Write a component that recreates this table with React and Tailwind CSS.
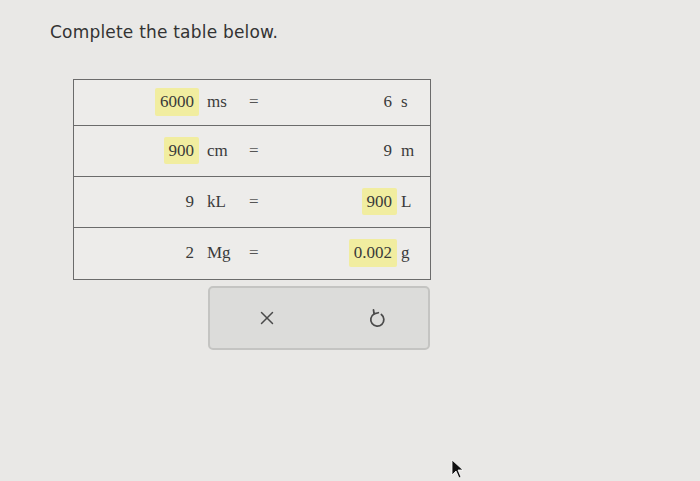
import { X } from 'lucide-react';

const rows = [
    { lv: '6000', lu: 'ms', lh: true, rv: '6', ru: 's', rh: false, h: 'h-[45px]' },
    { lv: '900', lu: 'cm', lh: true, rv: '9', ru: 'm', rh: false, h: 'h-[51px]' },
    { lv: '9', lu: 'kL', lh: false, rv: '900', ru: 'L', rh: true, h: 'h-[51px]' },
    { lv: '2', lu: 'Mg', lh: false, rv: '0.002', ru: 'g', rh: true, h: 'h-[52px]' },
];

// every value sits in the same padded box, only answered ones are highlighted
const Value = ({ v, hl }) => (
    <span className={`px-[5px] py-[1px] rounded-[2px] ${hl ? 'bg-[#f1eda0]' : ''}`}>{v}</span>
);

const UndoIcon = () => (
    <svg width="24" height="24" viewBox="0 0 22 22" fill="none" stroke="#4a4a4a" strokeWidth="1.6" strokeLinecap="round" strokeLinejoin="round">
        <path d="M8.3 7.3 A6 6 0 1 0 15 7.8" />
        <path d="M8.3 7.3 L12.2 6.2 M8.3 7.3 L7.8 3.6" />
    </svg>
);

const App = () => {
    return (
        <div className="w-[700px] h-[481px] bg-[#e9e8e6] relative overflow-hidden">
            <div className="pt-[20px] pl-[50px] text-[17px] text-[#333] font-['DejaVu_Sans',sans-serif] tracking-[0.2px]">
                Complete the table below.
            </div>

            <div className="ml-[73px] mt-[33px] w-[358px] border border-[#6b6b6b] bg-[#edecea] font-['Liberation_Serif',serif] text-[17px] text-[#3a3a3a]">
                {rows.map((r, i) => (
                    <div
                        key={i}
                        className={`flex items-center ${r.h} ${i > 0 ? 'border-t border-[#6b6b6b]' : ''}`}
                    >
                        <div className="w-[125px] flex justify-end">
                            <Value v={r.lv} hl={r.lh} />
                        </div>
                        <span className="ml-[8px] w-[42px]">{r.lu}</span>
                        <div className="text-[#555]">=</div>
                        <div className="flex-1 flex justify-end">
                            <Value v={r.rv} hl={r.rh} />
                        </div>
                        <span className="ml-[4px] w-[29px]">{r.ru}</span>
                    </div>
                ))}
            </div>

            <div className="ml-[208px] mt-[6px] w-[222px] h-[64px] rounded-[5px] border-2 border-[#c4c4c2] bg-[#dcdcda] flex items-center">
                <div className="flex-1 flex justify-center pl-[6px]">
                    <X size={22} strokeWidth={1.6} className="text-[#4a4a4a]" />
                </div>
                <div className="flex-1 flex justify-center pl-[8px]">
                    <UndoIcon />
                </div>
            </div>

            <svg className="absolute left-[450px] top-[458px]" width="16" height="22" viewBox="0 0 16 22">
                <path d="M2 2 L2 17 L6 13 L9 20 L11 19 L8 12 L13 12 Z" fill="#111" stroke="#fff" strokeWidth="0.8" />
            </svg>
        </div>
    );
};

export default App;
